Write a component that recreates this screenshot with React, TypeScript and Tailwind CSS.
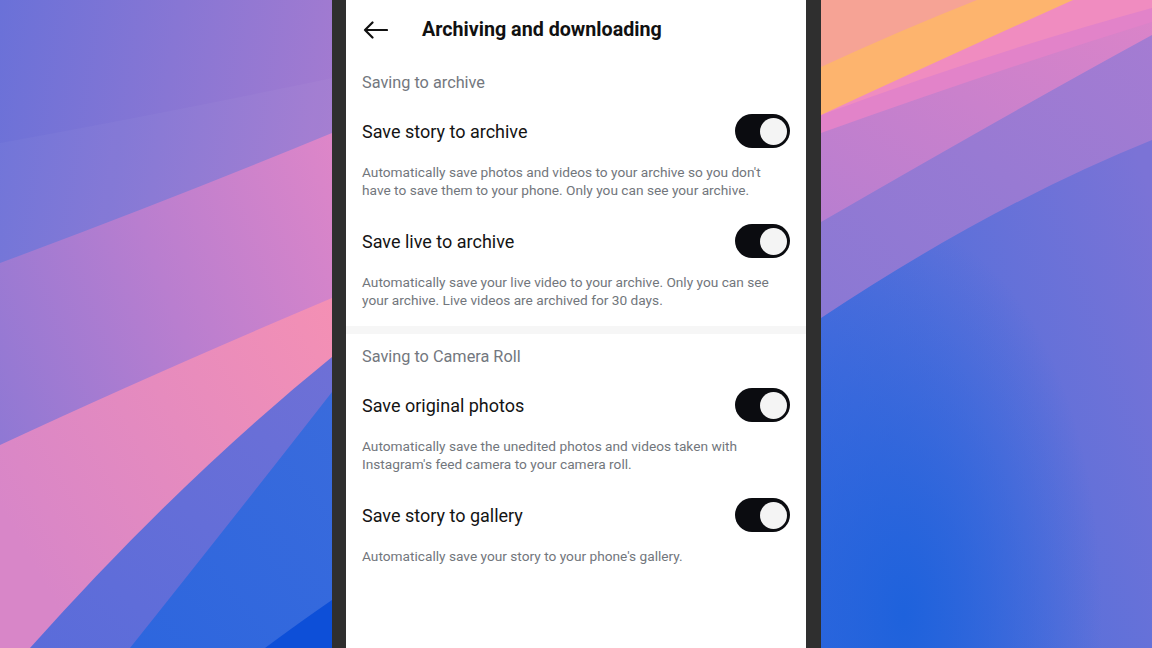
import React from "react";

function LeftWall() {
  return (
    <svg className="block h-full w-full" viewBox="0 0 332 648" preserveAspectRatio="none">
      <defs>
        <linearGradient id="l0" x1="0" y1="0" x2="1" y2="0.3">
          <stop offset="0" stopColor="#6a71d8" />
          <stop offset="1" stopColor="#a57bd0" />
        </linearGradient>
        <linearGradient id="l1" x1="0" y1="0.6" x2="1" y2="0">
          <stop offset="0" stopColor="#8f78d4" />
          <stop offset="0.5" stopColor="#b97ecf" />
          <stop offset="1" stopColor="#de86c8" />
        </linearGradient>
        <linearGradient id="l2" x1="0" y1="0.6" x2="1" y2="0">
          <stop offset="0" stopColor="#d886c8" />
          <stop offset="1" stopColor="#f490b4" />
        </linearGradient>
        <linearGradient id="l3" x1="0" y1="1" x2="1" y2="0">
          <stop offset="0" stopColor="#5a6cda" />
          <stop offset="1" stopColor="#6e70d6" />
        </linearGradient>
        <linearGradient id="l4" x1="0" y1="1" x2="1" y2="0">
          <stop offset="0" stopColor="#2d66de" />
          <stop offset="1" stopColor="#3a6bdc" />
        </linearGradient>
      </defs>
      <rect width="332" height="648" fill="url(#l0)" />
      <path d="M0,143 Q170,112 332,78 L332,648 L0,648 Z" fill="#ffffff" opacity="0.03" />
      <path d="M0,263 Q170,200 332,133 L332,648 L0,648 Z" fill="url(#l1)" />
      <path d="M0,445 Q150,375 332,298 L332,648 L0,648 Z" fill="url(#l2)" />
      <path d="M30,648 Q180,480 332,357 L332,648 Z" fill="url(#l3)" />
      <path d="M130,648 Q240,510 332,392 L332,648 Z" fill="url(#l4)" />
      <path d="M265,648 Q300,622 332,600 L332,648 Z" fill="#0d4fd8" />
    </svg>
  );
}

function RightWall() {
  return (
    <svg className="block h-full w-full" viewBox="0 0 331 648" preserveAspectRatio="none">
      <defs>
        <linearGradient id="r0" x1="0" y1="1" x2="1" y2="0.3">
          <stop offset="0" stopColor="#3568de" />
          <stop offset="0.5" stopColor="#5a70da" />
          <stop offset="1" stopColor="#7b73d6" />
        </linearGradient>
        <linearGradient id="r1" x1="0" y1="1" x2="1" y2="0">
          <stop offset="0" stopColor="#8a78d4" />
          <stop offset="1" stopColor="#a67cd2" />
        </linearGradient>
        <linearGradient id="r2" x1="0" y1="1" x2="1" y2="0">
          <stop offset="0" stopColor="#b87ed0" />
          <stop offset="1" stopColor="#dc84c8" />
        </linearGradient>
        <radialGradient id="r3" cx="0.25" cy="0.95" r="0.6">
          <stop offset="0" stopColor="#1e62dc" />
          <stop offset="1" stopColor="#1e62dc" stopOpacity="0" />
        </radialGradient>
      </defs>
      <rect width="331" height="648" fill="url(#r0)" />
      <rect width="331" height="648" fill="url(#r3)" />
      <path d="M0,0 L331,0 L331,140 Q170,205 0,318 Z" fill="url(#r1)" />
      <path d="M0,0 L331,0 L331,35 Q190,112 0,222 Z" fill="url(#r2)" />
      <path d="M0,0 L331,0 L331,22 Q170,72 0,133 Z" fill="#e283c9" />
      <path d="M0,0 L331,0 L331,8 Q170,52 0,115 Z" fill="#f08cc0" />
      <path d="M0,0 L252,0 Q130,55 0,115 Z" fill="#fdb46e" />
      <path d="M0,0 L156,0 Q80,30 0,67 Z" fill="#f6a395" />
    </svg>
  );
}

function Toggle() {
  return (
    <div className="flex h-[34px] w-[55px] items-center justify-end rounded-full bg-[#0b0c10] pr-[3px]">
      <div className="h-[27px] w-[27px] rounded-full bg-[#f4f4f4]" />
    </div>
  );
}

function Row({ title, desc }: { title: string; desc: string[] }) {
  return (
    <div>
      <div className="flex h-[50px] items-center justify-between pr-[16px]">
        <span className="pt-[1px] text-[18px] leading-none text-[#141414]">{title}</span>
        <Toggle />
      </div>
      <div className="pt-[7px] pb-[17px] text-[13.7px] leading-[18px] text-[#72767c]">
        {desc.map((d) => (
          <div key={d}>{d}</div>
        ))}
      </div>
    </div>
  );
}

export default function App() {
  return (
    <div
      className="flex h-[648px] w-[1152px] overflow-hidden"
      style={{ fontFamily: "Roboto, 'Noto Sans', sans-serif" }}
    >
      <div className="h-full w-[332px] shrink-0">
        <LeftWall />
      </div>
      <div className="h-full w-[14px] shrink-0 bg-[#2f2f2f]" />
      <div className="flex h-full w-[460px] shrink-0 flex-col bg-white">
        <div className="flex h-[58px] items-center pl-[17px]">
          <svg width="25" height="18" viewBox="0 0 25 18" fill="none" className="mt-[2px]">
            <path d="M24 9H2M9.5 1.5L2 9l7.5 7.5" stroke="#111" strokeWidth="2.2" strokeLinecap="round" strokeLinejoin="round" />
          </svg>
          <span className="ml-[34px] pt-[2px] text-[19.7px] font-bold leading-none text-[#111]">
            Archiving and downloading
          </span>
        </div>
        <div className="pl-[16px]">
          <div className="flex h-[48px] items-center pt-[2px] text-[16.3px] text-[#73777e]">Saving to archive</div>
          <Row
            title="Save story to archive"
            desc={[
              "Automatically save photos and videos to your archive so you don't",
              "have to save them to your phone. Only you can see your archive.",
            ]}
          />
          <Row
            title="Save live to archive"
            desc={[
              "Automatically save your live video to your archive. Only you can see",
              "your archive. Live videos are archived for 30 days.",
            ]}
          />
        </div>
        <div className="h-[8px] bg-[#f6f6f6]" />
        <div className="pl-[16px]">
          <div className="flex h-[46px] items-center text-[16.3px] text-[#73777e]">Saving to Camera Roll</div>
          <Row
            title="Save original photos"
            desc={[
              "Automatically save the unedited photos and videos taken with",
              "Instagram's feed camera to your camera roll.",
            ]}
          />
          <Row title="Save story to gallery" desc={["Automatically save your story to your phone's gallery."]} />
        </div>
      </div>
      <div className="h-full w-[15px] shrink-0 bg-[#2f2f2f]" />
      <div className="h-full flex-1">
        <RightWall />
      </div>
    </div>
  );
}
